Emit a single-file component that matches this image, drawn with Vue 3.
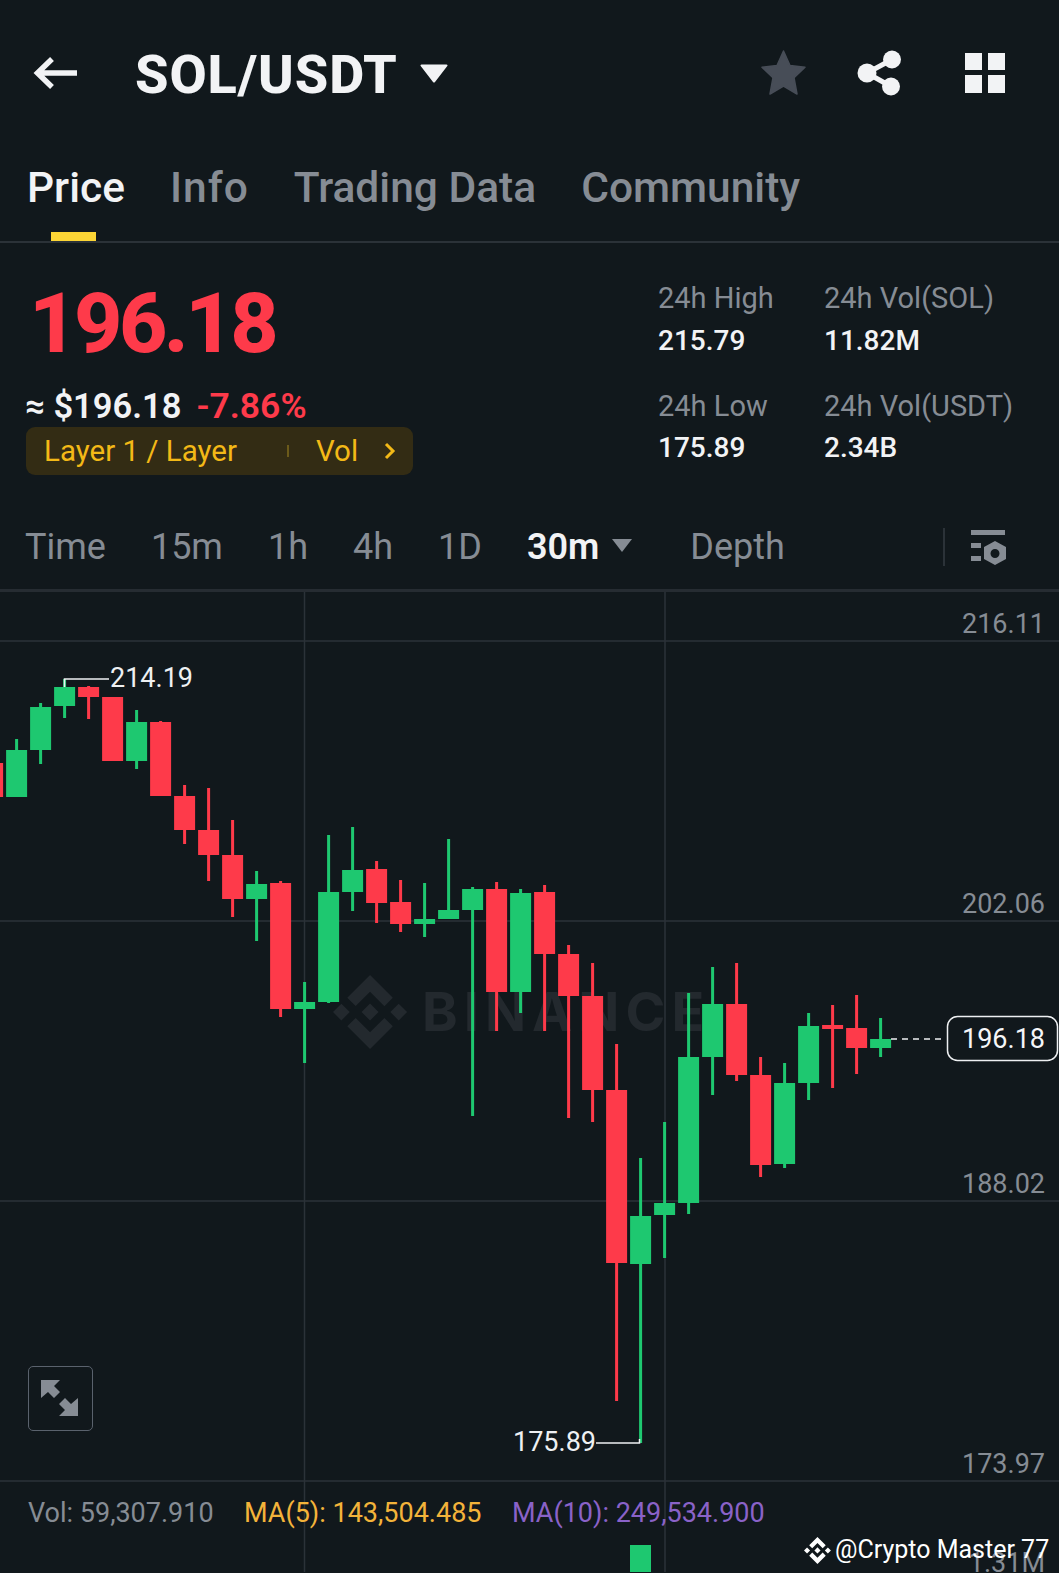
<template>
  <div class="page">
    <div class="top-bar">
      <svg class="back" width="46" height="34" viewBox="0 0 46 34">
        <path d="M44 17H5M19 3 4.500 17 19 31" fill="none" stroke="#f2f3f5" stroke-width="5.500" />
      </svg>
      <span class="pair">SOL/USDT</span>
      <svg class="pair-caret" width="28" height="20" viewBox="0 0 28 20">
        <path d="M1.500 1.500h25a1 1 0 0 1 .8 1.600L15 19a1.300 1.300 0 0 1-2 0L.7 3.100a1 1 0 0 1 .8-1.600z" fill="#f2f3f5" />
      </svg>
      <svg class="star" width="45" height="45" viewBox="0 0 45 45">
        <path d="M22.500 1 29 15.500l15 1.700-11 10.500 3 16.300-13.500-8-13.500 8 3-16.300L1 17.200l15-1.700z" fill="#474d57" stroke="#474d57" stroke-linejoin="round" stroke-width="1.500" />
      </svg>
      <svg class="share" width="46" height="46" viewBox="0 0 46 46">
        <path d="M35 9.500 10 23l24 13.500" fill="none" stroke="#f2f3f5" stroke-width="5" />
        <circle cx="35" cy="9.500" r="9" fill="#f2f3f5" />
        <circle cx="10" cy="23" r="9.500" fill="#f2f3f5" />
        <circle cx="34" cy="36.500" r="9" fill="#f2f3f5" />
      </svg>
      <div class="grid-icon"><i></i><i></i><i></i><i></i></div>
    </div>

    <div class="tabs">
      <span v-for="t in tabs" :key="t" class="tab" :class="{ active: t === 'Price' }">{{ t }}</span>
    </div>

    <div class="summary">
      <div class="left">
        <div class="price">196.18</div>
        <div class="sub"><span class="usd">≈ $196.18</span><span class="chg">-7.86%</span></div>
        <div class="tag">
          <span>Layer 1 / Layer</span>
          <i class="tick"></i>
          <span>Vol</span>
          <svg class="chev" width="12" height="18" viewBox="0 0 12 18">
            <path d="M2 2l7 7-7 7" fill="none" stroke="#f3b917" stroke-width="3" />
          </svg>
        </div>
      </div>
      <div class="stats">
        <div v-for="s in stats" :key="s.label" class="stat">
          <div class="stat-label">{{ s.label }}</div>
          <div class="stat-value">{{ s.value }}</div>
        </div>
      </div>
    </div>

    <div class="intervals">
      <span>Time</span>
      <span>15m</span>
      <span>1h</span>
      <span>4h</span>
      <span>1D</span>
      <span class="current">30m</span>
      <svg class="int-caret" width="20" height="13" viewBox="0 0 20 13">
        <path d="M0 0h20L10 13z" fill="#868c94" />
      </svg>
      <span class="depth">Depth</span>
      <i class="divider"></i>
      <svg width="36" height="36" viewBox="0 0 36 36">
        <path d="M1 1h34v5H1zM1 14h10v5H1zM1 27h10v5H1z" fill="#868c94" />
        <path fill-rule="evenodd" d="M25 12l11 6v12l-11 6-11-6V18zm0 8a4.500 4.500 0 1 0 0 9 4.500 4.500 0 0 0 0-9z" fill="#868c94" />
      </svg>
    </div>

    <div class="chart">
      <svg class="plot" width="1059" height="980" viewBox="0 592 1059 980">
        <line v-for="y in gridY" :key="y" x1="0" x2="1059" :y1="y" :y2="y" class="grid" />
        <line v-for="x in gridX" :key="x" :x1="x" :x2="x" y1="592" y2="1573" class="grid" />

        <path transform="translate(333 975) scale(0.585)" fill="#23292e" d="M38.730 53.200l24.590-24.580 24.600 24.600 14.300-14.310L63.320 0 24.420 38.900l14.310 14.300zM0 63.310l14.300-14.310 14.310 14.310-14.310 14.300zM38.730 73.410l24.590 24.590 24.600-24.600 14.310 14.290-38.900 38.910-38.910-38.880-.02-.02zM97.990 63.310l14.300-14.310 14.320 14.300-14.310 14.320zM77.830 63.300L63.320 48.780 52.590 59.510l-1.240 1.230-2.540 2.540 14.510 14.500 14.510-14.470z" />
        <text x="422" y="1031" class="brand">BINANCE</text>

        <g v-for="c in bars" :key="c.x" :fill="c.color">
          <rect :x="c.x - 1.500" :y="c.wt" width="3" :height="c.wb - c.wt" />
          <rect :x="c.x - 10.500" :y="c.bt" width="21" :height="c.bb - c.bt" />
        </g>
        <rect x="630" y="1545" width="21" height="27" fill="#1ec870" />

        <path d="M64.500 687v-8H109M596 1443h43.500v-4" fill="none" stroke="#eef0f2" stroke-width="1.500" />
        <text x="110" y="687" class="tick-white">214.19</text>
        <text x="513" y="1451" class="tick-white">175.89</text>

        <text v-for="a in axis" :key="a.v" x="1045" :y="a.y" class="axis">{{ a.v }}</text>
        <text x="1045" y="1572" class="axis">1.31M</text>

        <line x1="891" x2="945" y1="1039" y2="1039" stroke="#eef0f2" stroke-width="1.500" stroke-dasharray="6 5" />
        <rect x="947.500" y="1016.500" width="110" height="44" rx="10" fill="#11181c" stroke="#eef0f2" stroke-width="1.500" />
        <text x="1045" y="1048" class="last">196.18</text>

        <text y="1522" class="legend">
          <tspan x="28" fill="#868c94">Vol: 59,307.910</tspan>
          <tspan x="244" fill="#f3b33a">MA(5): 143,504.485</tspan>
          <tspan x="512" fill="#8a62c8">MA(10): 249,534.900</tspan>
        </text>
      </svg>

      <div class="expand">
        <svg width="40" height="38" viewBox="0 0 40 38">
          <path d="M0 0h19l-6 6 6 6-6 6-6-6-7 6zM37 36H18l6-6-6-6 6-6 6 6 7-6z" fill="#868c94" />
        </svg>
      </div>

      <div class="mark">
        <svg width="27" height="27" viewBox="0 0 127 127">
          <path fill="#fff" d="M38.730 53.200l24.590-24.580 24.600 24.600 14.300-14.310L63.320 0 24.420 38.900l14.310 14.300zM0 63.310l14.300-14.310 14.310 14.310-14.310 14.300zM38.730 73.410l24.590 24.590 24.600-24.600 14.310 14.290-38.900 38.910-38.910-38.880-.02-.02zM97.990 63.310l14.300-14.310 14.320 14.300-14.310 14.320zM77.830 63.300L63.320 48.780 52.590 59.510l-1.240 1.230-2.540 2.540 14.510 14.500 14.510-14.470z" />
        </svg>
        <span>@Crypto Master 77</span>
      </div>
    </div>
  </div>
</template>

<script setup>
const tabs = ['Price', 'Info', 'Trading Data', 'Community']
const stats = [
  { label: '24h High', value: '215.79' },
  { label: '24h Vol(SOL)', value: '11.82M' },
  { label: '24h Low', value: '175.89' },
  { label: '24h Vol(USDT)', value: '2.34B' }
]
const gridY = [641, 921, 1201, 1481]
const gridX = [304.5, 665]
const axis = [
  { v: '216.11', y: 633 },
  { v: '202.06', y: 913 },
  { v: '188.02', y: 1193 },
  { v: '173.97', y: 1473 }
]

// r = red, g = green: body top, body bottom, wick top, wick bottom
const raw = [
  ['r', 763, 797, 763, 797],
  ['g', 750, 797, 739, 797],
  ['g', 707, 750, 703, 764],
  ['g', 687, 706, 679, 718],
  ['r', 687, 697, 686, 719],
  ['r', 697, 761, 697, 761],
  ['g', 722, 761, 710, 769],
  ['r', 722, 796, 721, 796],
  ['r', 796, 830, 785, 844],
  ['r', 830, 855, 788, 881],
  ['r', 855, 899, 820, 917],
  ['g', 884, 899, 871, 941],
  ['r', 883, 1009, 881, 1017],
  ['g', 1002, 1009, 982, 1063],
  ['g', 892, 1002, 835, 1003],
  ['g', 870, 892, 827, 911],
  ['r', 869, 903, 861, 923],
  ['r', 902, 924, 880, 932],
  ['g', 919, 924, 883, 937],
  ['g', 910, 919, 839, 919],
  ['g', 889, 910, 887, 1116],
  ['r', 889, 992, 882, 1031],
  ['g', 893, 992, 889, 1013],
  ['r', 892, 954, 885, 1031],
  ['r', 954, 996, 945, 1118],
  ['r', 996, 1090, 963, 1122],
  ['r', 1090, 1263, 1044, 1401],
  ['g', 1216, 1264, 1158, 1443],
  ['g', 1203, 1215, 1122, 1258],
  ['g', 1057, 1203, 993, 1214],
  ['g', 1004, 1057, 967, 1095],
  ['r', 1004, 1075, 963, 1081],
  ['r', 1075, 1165, 1057, 1177],
  ['g', 1083, 1164, 1063, 1168],
  ['g', 1026, 1083, 1013, 1100],
  ['r', 1025, 1029, 1005, 1088],
  ['r', 1028, 1048, 995, 1074],
  ['g', 1039, 1048, 1018, 1057]
]
const bars = raw.map((c, i) => ({
  x: -7.4 + 24 * i,
  color: c[0] === 'r' ? '#fe3a4a' : '#1ec870',
  bt: c[1],
  bb: c[2],
  wt: c[3],
  wb: c[4]
}))
</script>

<style>
body {
  background: #11181c;
}
</style>

<style scoped>
.page {
  width: 1059px;
  height: 1573px;
  overflow: hidden;
  background: #11181c;
  color: #f2f3f5;
  font-family: Roboto, "Noto Sans", sans-serif;
}

.top-bar {
  height: 146px;
  display: flex;
  align-items: center;
  padding-left: 33px;
}

.pair {
  margin-left: 56px;
  margin-top: 3px;
  font-size: 54px;
  font-weight: 800;
  letter-spacing: 0.9px;
}

.pair-caret {
  margin-left: 22px;
  margin-top: 0;
}

.star {
  margin-left: auto;
  margin-top: -1px;
}

.share {
  margin-left: 51px;
  margin-top: 0;
}

.grid-icon {
  margin-left: 62px;
  margin-right: 54px;
  width: 40px;
  height: 40px;
  display: grid;
  grid-template-columns: 17px 17px;
  grid-template-rows: 17px 18px;
  gap: 5px 6px;
  margin-top: -1px;
}

.grid-icon i {
  background: #f2f3f5;
}

.tabs {
  height: 97px;
  display: flex;
  gap: 45px;
  align-items: center;
  padding-left: 27px;
  padding-bottom: 12px;
  box-sizing: border-box;
  border-bottom: 2px solid #2b3238;
}

.tab {
  position: relative;
  font-size: 42.5px;
  line-height: 50px;
  font-weight: 500;
  color: #868c94;
}

.tab:nth-child(2) {
  letter-spacing: 1px;
}

.tab.active {
  color: #f2f3f5;
}

.tab.active::after {
  content: "";
  position: absolute;
  left: 24px;
  top: 69px;
  width: 45px;
  height: 9.5px;
  background: #fcd535;
}

.summary {
  height: 259px;
  display: flex;
}

.left {
  padding: 32px 0 0 26px;
}

.price {
  font-size: 84px;
  line-height: 98px;
  font-weight: 800;
  letter-spacing: -3.5px;
  color: #fe3a4a;
  padding-left: 3px;
}

.sub {
  margin: 11px 0 0 -1px;
  height: 44px;
  line-height: 44px;
  display: flex;
  gap: 15px;
  font-size: 35px;
  font-weight: 600;
}

.usd {
  font-size: 34.5px;
}

.chg {
  color: #fe3a4a;
  font-size: 35.5px;
}

.tag {
  margin-top: -1px;
  width: 387px;
  height: 48px;
  box-sizing: border-box;
  display: flex;
  align-items: center;
  padding-left: 18px;
  border-radius: 9px;
  background: #332c14;
  color: #f3b917;
  font-size: 29.5px;
}

.tick {
  width: 2px;
  height: 12px;
  margin: 0 27px 0 50px;
  background: #6b5a1a;
}

.chev {
  margin-left: 26px;
}

.stats {
  margin-left: auto;
  width: 401px;
  padding-top: 35px;
  display: grid;
  grid-template-columns: 166px 1fr;
  grid-auto-rows: 82.5px;
  row-gap: 25px;
}

.stat-label {
  font-size: 29px;
  line-height: 40px;
  color: #868c94;
}

.stat-value {
  margin-top: 2.5px;
  font-size: 28px;
  line-height: 40px;
  font-weight: 500;
  color: #f2f3f5;
}

.intervals {
  height: 90px;
  box-sizing: border-box;
  border-bottom: 3px solid #262c32;
  display: flex;
  align-items: center;
  gap: 45px;
  padding: 2px 53px 0 25px;
  font-size: 36px;
  color: #868c94;
}

.current {
  color: #f2f3f5;
  font-weight: 600;
}

.int-caret {
  margin: -2px 0 0 -32px;
}

.depth {
  margin-left: 13px;
}

.divider {
  margin-left: auto;
  width: 2px;
  height: 38px;
  background: #2b3238;
}

.intervals svg:last-child {
  margin-left: -20px;
}

.chart {
  position: relative;
  height: 980px;
}

.plot {
  display: block;
}

.grid {
  stroke: #2b3238;
  stroke-width: 1.5;
}

.brand {
  font-family: Inter, sans-serif;
  font-size: 54px;
  font-weight: 700;
  letter-spacing: 6px;
  fill: #23292e;
}

.tick-white {
  font-size: 27px;
  fill: #eef0f2;
}

.axis {
  font-size: 27px;
  fill: #868c94;
  text-anchor: end;
}

.last {
  font-size: 27px;
  fill: #f5f6f8;
  text-anchor: end;
}

.legend {
  font-size: 27px;
}

.expand {
  position: absolute;
  left: 28px;
  top: 774px;
  width: 65px;
  height: 65px;
  box-sizing: border-box;
  border: 1.5px solid #5a626d;
  border-radius: 5px;
  display: flex;
  align-items: center;
  justify-content: center;
}

.mark {
  position: absolute;
  left: 804px;
  top: 942px;
  display: flex;
  align-items: center;
  gap: 4px;
  color: #fff;
  font-size: 25px;
  line-height: 32px;
  white-space: nowrap;
}
</style>
